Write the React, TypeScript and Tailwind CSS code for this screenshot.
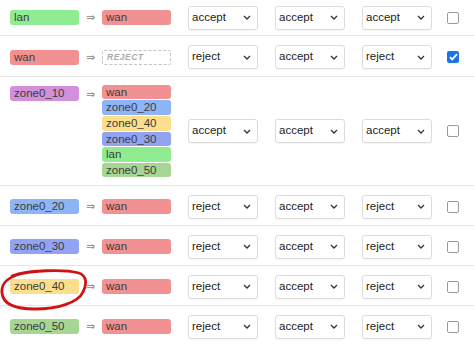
import * as React from "react";

// zone colours as shown in the forwarding table
const ZONE_COLORS: Record<string, string> = {
  lan: "bg-[#90ec90]",
  wan: "bg-[#f19191]",
  zone0_10: "bg-[#d28fda]",
  zone0_20: "bg-[#8db4f5]",
  zone0_30: "bg-[#93a3f4]",
  zone0_40: "bg-[#fbdf8c]",
  zone0_50: "bg-[#a6d594]",
};

type Row = {
  src: string;
  dest: string[] | null;
  input: string;
  output: string;
  forward: string;
  masq: boolean;
  h: string;
  circled?: boolean;
};

const rows: Row[] = [
  { src: "lan", dest: ["wan"], input: "accept", output: "accept", forward: "accept", masq: false, h: "h-[40px] pt-[4px]" },
  { src: "wan", dest: null, input: "reject", output: "accept", forward: "reject", masq: true, h: "h-[41px] pt-[2px]" },
  {
    src: "zone0_10",
    dest: ["wan", "zone0_20", "zone0_40", "zone0_30", "lan", "zone0_50"],
    input: "accept",
    output: "accept",
    forward: "accept",
    masq: false,
    h: "h-[109px]",
  },
  { src: "zone0_20", dest: ["wan"], input: "reject", output: "accept", forward: "reject", masq: false, h: "h-[40px] pt-[2px]" },
  { src: "zone0_30", dest: ["wan"], input: "reject", output: "accept", forward: "reject", masq: false, h: "h-[40px] pt-[2px]" },
  { src: "zone0_40", dest: ["wan"], input: "reject", output: "accept", forward: "reject", masq: false, h: "h-[40px] pt-[2px]", circled: true },
  { src: "zone0_50", dest: ["wan"], input: "reject", output: "accept", forward: "reject", masq: false, h: "h-[40px] pt-[2px]" },
];

function Badge({ name, className = "" }: { name: string; className?: string }) {
  return (
    <div
      className={`${ZONE_COLORS[name]} w-[69px] rounded-[3px] pl-[4px] text-[11.5px] leading-[15px] text-[#3c3c3c] ${className}`}
    >
      {name}
    </div>
  );
}

function FakeSelect({ value }: { value: string }) {
  return (
    <div className="flex h-[24px] w-[70px] items-center justify-between rounded-[3px] border border-[#dcdcdc] bg-white pl-[3px] pr-[6px] text-[11.5px] text-[#222] shadow-[0_1px_1px_rgba(0,0,0,0.04)]">
      <span>{value}</span>
      <svg width="8" height="5" viewBox="0 0 8 5" fill="none">
        <path d="M1 1l3 3 3-3" stroke="#333" strokeWidth="1.3" />
      </svg>
    </div>
  );
}

function Check({ checked }: { checked: boolean }) {
  if (checked) {
    return (
      <div className="flex h-[12px] w-[12px] items-center justify-center rounded-[2px] bg-[#1a73e8]">
        <svg width="9" height="8" viewBox="0 0 9 8" fill="none">
          <path d="M1 4.2l2.2 2.2L8 1.2" stroke="white" strokeWidth="1.8" />
        </svg>
      </div>
    );
  }
  return <div className="h-[12px] w-[12px] rounded-[2px] border border-[#9a9a9a] bg-white" />;
}

export default function App() {
  return (
    <div className="h-[345px] w-[474px] overflow-hidden bg-white font-['Liberation_Sans',Arial,sans-serif]">
      <div className="-mt-[4px]">
        {rows.map((r) => {
          const multi = r.dest !== null && r.dest.length > 1;
          return (
            <div key={r.src} className={`relative flex items-center border-b border-[#e6e6e6] pl-[10px] ${r.h}`}>
              <div className={multi ? "self-start pt-[9px]" : ""}>
                <Badge name={r.src} />
              </div>
              <div className={`flex w-[23px] justify-center text-[11px] text-[#888] ${multi ? "self-start pt-[9px]" : ""}`}>
                ⇒
              </div>
              <div className="w-[69px]">
                {r.dest === null ? (
                  <div className="h-[15px] w-[69px] rounded-[2px] border border-dashed border-[#c4c4c4] pl-[4px] text-[8.5px] font-bold italic leading-[13px] tracking-[0.5px] text-[#aaa]">
                    REJECT
                  </div>
                ) : (
                  <div className="flex flex-col gap-px">
                    {r.dest.map((d) => (
                      <Badge key={d} name={d} className={multi ? "h-[14.6px] leading-[14.6px]" : ""} />
                    ))}
                  </div>
                )}
              </div>
              <div className="ml-[17px] flex gap-[17px]">
                <FakeSelect value={r.input} />
                <FakeSelect value={r.output} />
                <FakeSelect value={r.forward} />
              </div>
              <div className="ml-[15px]">
                <Check checked={r.masq} />
              </div>
              {r.circled ? (
                <svg className="pointer-events-none absolute left-0 top-[3px]" width="88" height="44" viewBox="0 0 88 44" fill="none">
                  <path
                    d="M12 7C28 1 64 0 79 4c8 3 8 11 4 19-5 11-26 17-48 17C16 40 3 35 2 24 1 15 6 9 20 5c7-2 16-3 24-3"
                    stroke="#d01212"
                    strokeWidth="2.8"
                    strokeLinecap="round"
                  />
                </svg>
              ) : null}
            </div>
          );
        })}
      </div>
    </div>
  );
}
